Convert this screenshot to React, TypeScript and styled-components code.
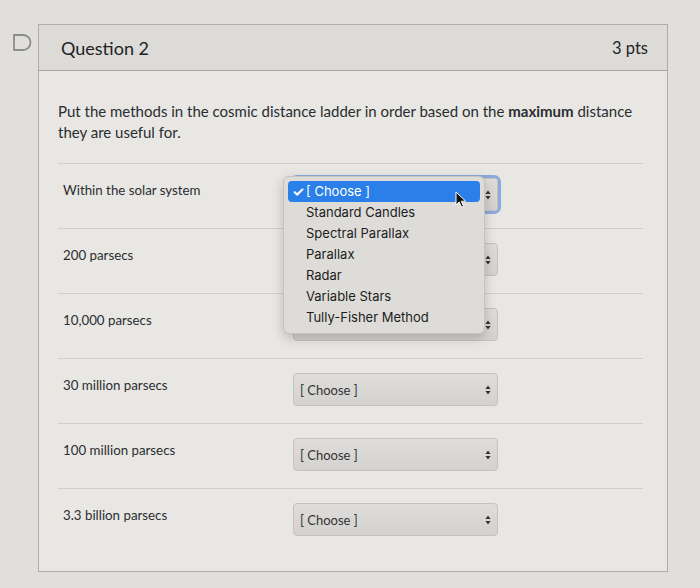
import React from 'react';
import styled, { createGlobalStyle } from 'styled-components';

const GlobalStyle = createGlobalStyle`
  html, body {
    margin: 0;
    padding: 0;
    background: #e0dfdc;
    font-family: Lato, "Open Sans", sans-serif;
    color: #2d3b45;
  }
`;

const Page = styled.div`
  width: 700px;
  height: 588px;
  display: flex;
  align-items: flex-start;
  padding: 24px 0 0 12px;
  box-sizing: border-box;
  overflow: hidden;
`;

const FlagBox = styled.div`
  width: 26px;
  padding-top: 9px;
  flex-shrink: 0;
`;

const Card = styled.section`
  width: 630px;
  height: 548px;
  box-sizing: border-box;
  border: 1px solid #aeadaa;
  background: #e8e7e4;
  position: relative;
`;

const Header = styled.header`
  height: 46px;
  box-sizing: border-box;
  display: flex;
  align-items: center;
  justify-content: space-between;
  padding: 0 19px 0 22px;
  background: #dcdbd8;
  border-bottom: 1px solid #a9a8a5;
`;

const Title = styled.h2`
  margin: 0;
  font-size: 18px;
  font-weight: 400;
  color: #1f2326;
`;

const Points = styled.span`
  font-size: 16.5px;
  color: #1f2326;
`;

const Body = styled.div`
  padding: 30px 24px 0 19px;
`;

const Prompt = styled.p`
  margin: 0 0 20px;
  font-size: 15px;
  line-height: 21px;
  color: #2a2d30;

  strong {
    font-weight: 700;
  }
`;

const Row = styled.div`
  display: grid;
  grid-template-columns: 230px 205px;
  align-items: start;
  padding: 14px 0 17px 5px;
  border-top: 1px solid #cfcecb;
`;

const Label = styled.span`
  font-size: 13.3px;
  line-height: 18px;
  padding-top: 3px;
  color: #2a2d30;
`;

const Select = styled.div<{ $focused?: boolean }>`
  height: 33px;
  box-sizing: border-box;
  display: flex;
  align-items: center;
  justify-content: space-between;
  padding: 0 6px 0 6px;
  border: 1px solid #c3c2bf;
  border-radius: 4px;
  background: linear-gradient(#dedddb, #d3d2d0);
  font-size: 13px;
  color: #333;
  position: relative;
  box-shadow: ${(p) => (p.$focused ? '0 0 0 3px #8ea9dc' : 'none')};
`;

const Arrows = styled.svg`
  width: 6px;
  height: 10px;
`;

const Menu = styled.ul`
  position: absolute;
  left: 244px;
  top: 151px;
  width: 202px;
  margin: 0;
  padding: 4px 4px 5px;
  box-sizing: border-box;
  list-style: none;
  background: #dedcd9;
  border: 1px solid #c6c4c0;
  border-radius: 6px;
  box-shadow: 0 4px 12px rgba(0, 0, 0, 0.2);
  font-family: Inter, "Liberation Sans", sans-serif;
  font-size: 13px;
  z-index: 2;
`;

const Option = styled.li<{ $active?: boolean }>`
  height: 21px;
  line-height: 21px;
  padding-left: 18px;
  border-radius: 4px;
  position: relative;
  color: ${(p) => (p.$active ? '#fff' : '#1c1c1c')};
  background: ${(p) => (p.$active ? '#2a7fe8' : 'transparent')};
`;

const Check = styled.span`
  position: absolute;
  left: 4px;
  top: 0;
  font-size: 14px;
  font-weight: 700;
`;

const Cursor = styled.svg`
  position: absolute;
  left: 171px;
  top: 14px;
  width: 12px;
  height: 18px;
`;

const rows = [
  'Within the solar system',
  '200 parsecs',
  '10,000 parsecs',
  '30 million parsecs',
  '100 million parsecs',
  '3.3 billion parsecs',
];

const options = [
  '[ Choose ]',
  'Standard Candles',
  'Spectral Parallax',
  'Parallax',
  'Radar',
  'Variable Stars',
  'Tully-Fisher Method',
];

const Flag = () => (
  <svg width="20" height="19" viewBox="0 0 20 19" fill="none">
    <path d="M2 2h9a7.5 7.5 0 0 1 0 15H2z" stroke="#8c8c8a" strokeWidth="1.8" strokeLinejoin="round" />
  </svg>
);

const UpDown = () => (
  <Arrows viewBox="0 0 6 10">
    <path d="M3 0.5L5.6 4H0.4z M3 9.5L0.4 6h5.2z" fill="#333" />
  </Arrows>
);

export default function App() {
  return (
    <>
      <GlobalStyle />
      <Page>
        <FlagBox>
          <Flag />
        </FlagBox>
        <Card>
          <Header>
            <Title>Question 2</Title>
            <Points>3 pts</Points>
          </Header>
          <Body>
            <Prompt>
              Put the methods in the cosmic distance ladder in order based on the <strong>maximum</strong> distance
              they are useful for.
            </Prompt>
            {rows.map((r, i) => (
              <Row key={r}>
                <Label>{r}</Label>
                <Select $focused={i === 0}>
                  <span>[ Choose ]</span>
                  <UpDown />
                </Select>
              </Row>
            ))}
          </Body>
          <Menu>
            {options.map((o, i) => (
              <Option key={o} $active={i === 0}>
                {i === 0 && <Check>✓</Check>}
                {o}
              </Option>
            ))}
            <Cursor viewBox="0 0 12 18">
              <path d="M1 1v13l3.2-3 2.3 5.2 2-0.9-2.2-5.1h4.4z" fill="#111" stroke="#fff" strokeWidth="1" />
            </Cursor>
          </Menu>
        </Card>
      </Page>
    </>
  );
}
